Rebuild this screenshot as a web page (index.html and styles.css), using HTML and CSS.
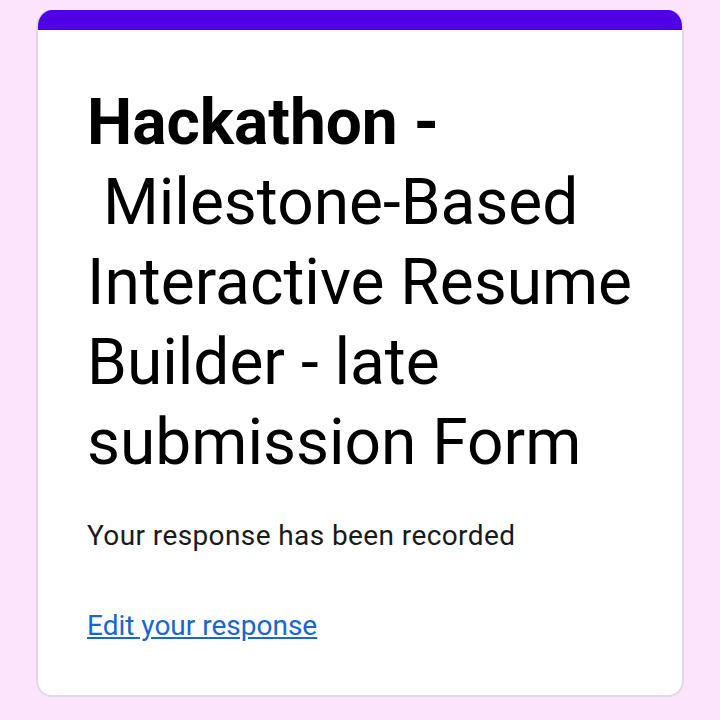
FILE: index.html
```html
<!DOCTYPE html>
<html>
<head>
<meta charset="utf-8">
<link rel="stylesheet" href="styles.css">
</head>
<body>
<div class="card">
  <div class="topbar"></div>
  <div class="content">
    <div class="title"><b>Hackathon - </b>
 Milestone-Based Interactive Resume Builder - late submission Form</div>
    <div class="msg">Your response has been recorded</div>
    <a class="link" href="#">Edit your response</a>
  </div>
</div>
</body>
</html>
```
FILE: styles.css
```css
html, body {
  margin: 0;
  padding: 0;
  background: #fbe4fc;
  font-family: Roboto, "Liberation Sans", sans-serif;
}
.card {
  margin: 10px 36px 0 36px;
  background: #fff;
  border: 2px solid #e2d8e4;
  border-top: none;
  border-radius: 16px;
  overflow: hidden;
}
.topbar {
  height: 20px;
  background: #5000e4;
}
.content {
  padding: 53px 48px 49px 49px;
}
.title {
  font-size: 64px;
  line-height: 80px;
  color: #000;
  white-space: pre-wrap;
}
.title b {
  font-weight: 700;
}
.msg {
  margin-top: 33px;
  font-size: 28px;
  line-height: 40px;
  letter-spacing: 0.4px;
  color: #1a1a1a;
}
.link {
  display: inline-block;
  margin-top: 50px;
  font-size: 28px;
  line-height: 40px;
  color: #1a66cc;
  text-decoration: underline;
}
```
